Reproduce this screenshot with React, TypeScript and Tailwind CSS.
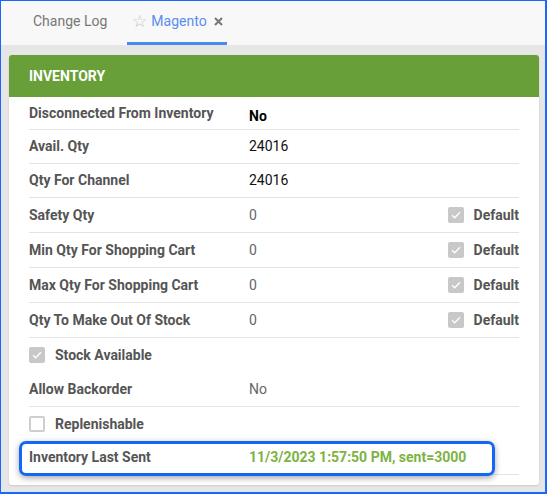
import React from "react";

function Check({ checked }: { checked: boolean }) {
  if (!checked) {
    return <div className="w-4 h-4 rounded-[2px] border-2 border-[#cfcfcf] bg-white shrink-0" />;
  }
  return (
    <div className="w-4 h-4 rounded-[2px] bg-[#c8c8c8] flex items-center justify-center shrink-0">
      <svg width="10" height="8" viewBox="0 0 10 8" fill="none">
        <path d="M1 4.2 L3.7 6.8 L9 1.2" stroke="white" strokeWidth="1.3" />
      </svg>
    </div>
  );
}

function Row({
  label,
  children,
  border = true,
  h = "h-[34px]",
  right,
}: {
  label: React.ReactNode;
  children?: React.ReactNode;
  border?: boolean;
  h?: string;
  right?: boolean;
}) {
  return (
    <div className={`flex items-center ${h} ${border ? "border-b border-[#e3e3e3]" : ""}`}>
      <div className="w-[220px] shrink-0 font-bold text-[14px] text-[#555]">{label}</div>
      <div className="flex-1 text-[14px]">{children}</div>
      {right && (
        <div className="flex items-center gap-[10px]">
          <Check checked />
          <span className="font-bold text-[14px] text-[#555]">Default</span>
        </div>
      )}
    </div>
  );
}

export default function App() {
  return (
    <div
      className="w-[547px] h-[494px] border-l border-t border-r-2 border-b-2 border-[#1a66ff] bg-[#e6e6e6] flex flex-col overflow-hidden"
      style={{ fontFamily: "Roboto, 'Liberation Sans', sans-serif" }}
    >
      <div className="h-[44px] bg-[#f8f8f8] flex items-end shrink-0">
        <div className="flex items-center h-[44px] pl-[32px] pr-[20px] text-[14px] text-[#777] pb-[3px]">
          Change Log
        </div>
        <div className="flex items-center h-[44px] w-[100px] pl-[5px] border-b-[3px] border-[#4a8af0] text-[14px] text-[#5a8def]">
          <span className="text-[#c4c4c4] text-[17px] mr-[4px] leading-none">☆</span>
          <span>Magento</span>
          <svg className="ml-[7px]" width="9" height="9" viewBox="0 0 9 9">
            <path d="M1 1 L8 8 M8 1 L1 8" stroke="#777" strokeWidth="2" />
          </svg>
        </div>
      </div>
      <div className="flex-1 pt-[10px] pl-2 pr-[6px]">
        <div className="bg-white rounded-[3px] shadow-[0_1px_2px_rgba(0,0,0,0.12)] pb-[10px]">
          <div className="h-[42px] bg-[#689f38] rounded-t-[3px] flex items-center px-5 text-white font-bold text-[14px]">
            INVENTORY
          </div>
          <div className="px-5">
            <Row label="Disconnected From Inventory" h="h-[33px]">
              <span className="font-bold text-black relative top-[3px]">No</span>
            </Row>
            <Row label="Avail. Qty">
              <span className="text-[#111]">24016</span>
            </Row>
            <Row label="Qty For Channel">
              <span className="text-[#111]">24016</span>
            </Row>
            <Row label="Safety Qty" h="h-[35px]" right>
              <span className="text-[#666]">0</span>
            </Row>
            <Row label="Min Qty For Shopping Cart" h="h-[35px]" right>
              <span className="text-[#666]">0</span>
            </Row>
            <Row label="Max Qty For Shopping Cart" h="h-[35px]" right>
              <span className="text-[#666]">0</span>
            </Row>
            <Row label="Qty To Make Out Of Stock" h="h-[35px]" right>
              <span className="text-[#666]">0</span>
            </Row>
            <div className="flex items-center h-[34px] gap-[10px]">
              <Check checked />
              <span className="font-bold text-[14px] text-[#555]">Stock Available</span>
            </div>
            <Row label="Allow Backorder" h="h-[35px]">
              <span className="text-[#666]">No</span>
            </Row>
            <div className="flex items-center h-[34px] gap-[10px]">
              <Check checked={false} />
              <span className="font-bold text-[14px] text-[#555]">Replenishable</span>
            </div>
            <div className="relative">
              <Row label="Inventory Last Sent">
                <span className="font-bold text-[#7cb342]">11/3/2023 1:57:50 PM, sent=3000</span>
              </Row>
              <div className="absolute -left-[10px] top-0 w-[476px] h-[35px] border-[3px] border-[#1466f5] rounded-[7px] shadow-[0_2px_6px_rgba(0,0,0,0.35)]" />
            </div>
          </div>
        </div>
      </div>
    </div>
  );
}
